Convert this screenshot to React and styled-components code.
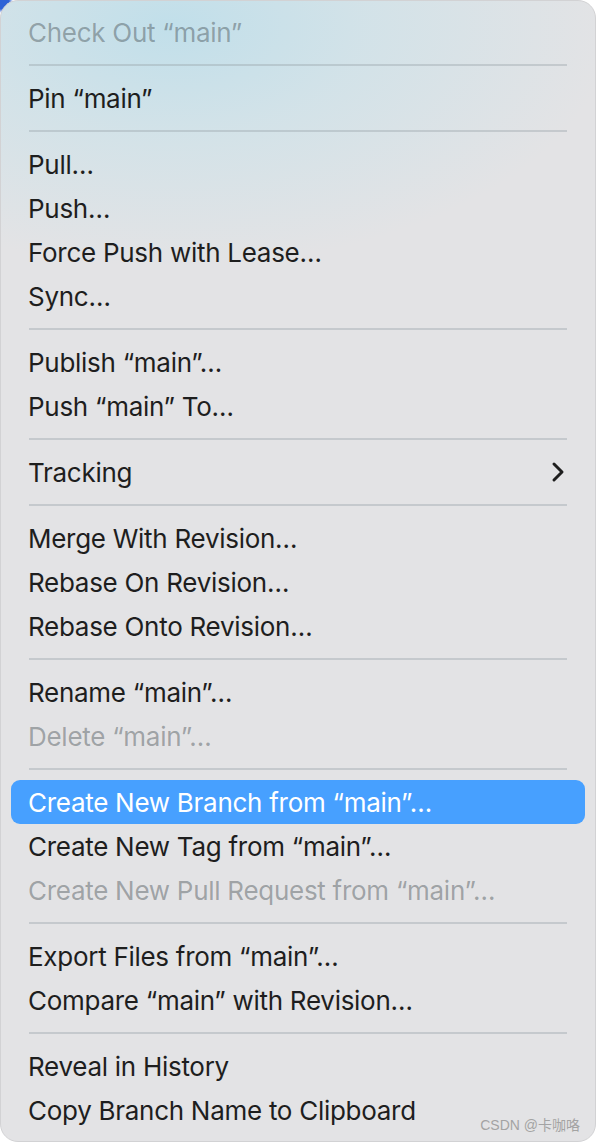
import React from "react";
import styled, { createGlobalStyle } from "styled-components";

const Global = createGlobalStyle`
  html, body { margin: 0; padding: 0; }
  body {
    width: 596px;
    height: 1142px;
    overflow: hidden;
    background: radial-gradient(circle at 0 0, #2f63d6 0, #2f63d6 9px, #ffffff 13px);
    font-family: Inter, "Noto Sans", sans-serif;
  }
`;

const Menu = styled.div`
  position: relative;
  box-sizing: border-box;
  width: 596px;
  height: 1142px;
  padding: 9px 0;
  border-radius: 18px;
  border: 1px solid #d2d2d4;
  overflow: hidden;
  display: flex;
  flex-direction: column;
  background:
    radial-gradient(ellipse 440px 240px at 170px 25px, rgba(193, 223, 234, 1) 0%, rgba(202, 226, 234, 0.65) 45%, rgba(227, 227, 229, 0) 100%),
    #e3e3e5;
`;

const Item = styled.div`
  display: flex;
  align-items: center;
  justify-content: space-between;
  height: 44px;
  flex: none;
  margin: 0 10px;
  padding: 0 20px 0 17px;
  border-radius: 9px;
  font-size: 26px;
  letter-spacing: -0.28px;
  white-space: nowrap;
  color: ${(p) => (p.$active ? "#ffffff" : p.$disabled ? "rgba(60, 70, 75, 0.42)" : "#1e1e1e")};
  background: ${(p) => (p.$active ? "#47a0ff" : "transparent")};
`;

const Separator = styled.div`
  height: 22px;
  flex: none;
  display: flex;
  align-items: center;
  padding: 0 28px;
  &::after {
    content: "";
    display: block;
    width: 100%;
    height: 2px;
    background: rgba(150, 160, 165, 0.38);
  }
`;

const Watermark = styled.div`
  position: absolute;
  right: 15px;
  bottom: 7px;
  font-family: "Liberation Sans", "Noto Sans CJK SC", sans-serif;
  font-size: 14px;
  color: #a3a3a3;
`;

const Chevron = () => (
  <svg width="14" height="22" viewBox="0 0 14 22" fill="none">
    <path d="M3 3 L11 11 L3 19" stroke="#1e1e1e" strokeWidth="3" strokeLinecap="round" strokeLinejoin="round" />
  </svg>
);

const groups = [
  [{ t: "Check Out “main”", d: true }],
  [{ t: "Pin “main”" }],
  [{ t: "Pull…" }, { t: "Push…" }, { t: "Force Push with Lease…" }, { t: "Sync…" }],
  [{ t: "Publish “main”…" }, { t: "Push “main” To…" }],
  [{ t: "Tracking", sub: true }],
  [{ t: "Merge With Revision…" }, { t: "Rebase On Revision…" }, { t: "Rebase Onto Revision…" }],
  [{ t: "Rename “main”…" }, { t: "Delete “main”…", d: true }],
  [
    { t: "Create New Branch from “main”…", a: true },
    { t: "Create New Tag from “main”…" },
    { t: "Create New Pull Request from “main”…", d: true },
  ],
  [{ t: "Export Files from “main”…" }, { t: "Compare “main” with Revision…" }],
  [{ t: "Reveal in History" }, { t: "Copy Branch Name to Clipboard" }],
];

export default function App() {
  return (
    <>
      <Global />
      <Menu>
        {groups.map((g, gi) => (
          <React.Fragment key={gi}>
            {gi > 0 && <Separator />}
            {g.map((it) => (
              <Item key={it.t} $disabled={it.d} $active={it.a}>
                <span>{it.t}</span>
                {it.sub && <Chevron />}
              </Item>
            ))}
          </React.Fragment>
        ))}
        <Watermark>CSDN @卡咖咯</Watermark>
      </Menu>
    </>
  );
}
